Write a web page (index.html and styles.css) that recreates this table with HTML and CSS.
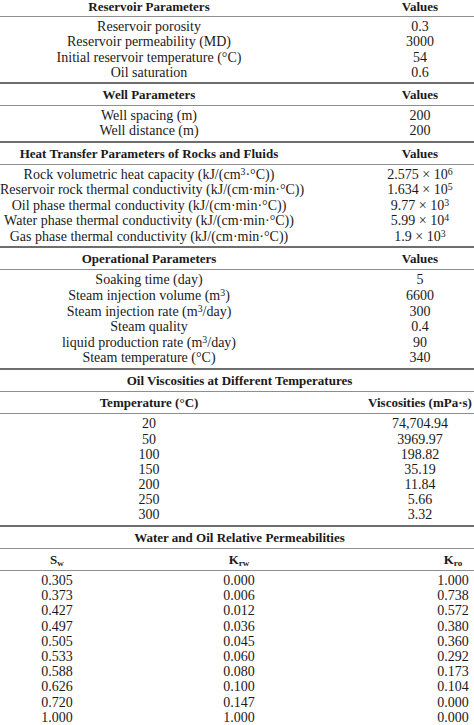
FILE: index.html
```html
<!DOCTYPE html>
<html lang="en">
<head>
<meta charset="utf-8">
<title>Simulation Parameters</title>
<link rel="stylesheet" href="styles.css">
</head>
<body>
<div class="page">
  <div class="table">

    <section class="block">
      <div class="row head first"><span>Reservoir Parameters</span><span>Values</span></div>
      <div class="body">
        <div class="row"><span>Reservoir porosity</span><span>0.3</span></div>
        <div class="row"><span>Reservoir permeability (MD)</span><span>3000</span></div>
        <div class="row"><span>Initial reservoir temperature (°C)</span><span>54</span></div>
        <div class="row"><span>Oil saturation</span><span>0.6</span></div>
      </div>
    </section>

    <section class="block">
      <div class="row head"><span>Well Parameters</span><span>Values</span></div>
      <div class="body">
        <div class="row"><span>Well spacing (m)</span><span>200</span></div>
        <div class="row"><span>Well distance (m)</span><span>200</span></div>
      </div>
    </section>

    <section class="block">
      <div class="row head"><span>Heat Transfer Parameters of Rocks and Fluids</span><span>Values</span></div>
      <div class="body tall">
        <div class="row"><span>Rock volumetric heat capacity (kJ/(cm<sup>3</sup>·°C))</span><span>2.575 × 10<sup>6</sup></span></div>
        <div class="row"><span>Reservoir rock thermal conductivity (kJ/(cm·min·°C))</span><span>1.634 × 10<sup>5</sup></span></div>
        <div class="row"><span>Oil phase thermal conductivity (kJ/(cm·min·°C))</span><span>9.77 × 10<sup>3</sup></span></div>
        <div class="row"><span>Water phase thermal conductivity (kJ/(cm·min·°C))</span><span>5.99 × 10<sup>4</sup></span></div>
        <div class="row"><span>Gas phase thermal conductivity (kJ/(cm·min·°C))</span><span>1.9 × 10<sup>3</sup></span></div>
      </div>
    </section>

    <section class="block">
      <div class="row head"><span>Operational Parameters</span><span>Values</span></div>
      <div class="body taller">
        <div class="row"><span>Soaking time (day)</span><span>5</span></div>
        <div class="row"><span>Steam injection volume (m<sup>3</sup>)</span><span>6600</span></div>
        <div class="row"><span>Steam injection rate (m<sup>3</sup>/day)</span><span>300</span></div>
        <div class="row"><span>Steam quality</span><span>0.4</span></div>
        <div class="row"><span>liquid production rate (m<sup>3</sup>/day)</span><span>90</span></div>
        <div class="row"><span>Steam temperature (°C)</span><span>340</span></div>
      </div>
    </section>

    <section class="block">
      <div class="title">Oil Viscosities at Different Temperatures</div>
      <div class="row head"><span>Temperature (°C)</span><span>Viscosities (mPa·s)</span></div>
      <div class="body">
        <div class="row"><span>20</span><span>74,704.94</span></div>
        <div class="row"><span>50</span><span>3969.97</span></div>
        <div class="row"><span>100</span><span>198.82</span></div>
        <div class="row"><span>150</span><span>35.19</span></div>
        <div class="row"><span>200</span><span>11.84</span></div>
        <div class="row"><span>250</span><span>5.66</span></div>
        <div class="row"><span>300</span><span>3.32</span></div>
      </div>
    </section>

    <section class="block">
      <div class="title">Water and Oil Relative Permeabilities</div>
      <div class="row three head"><span>S<sub>w</sub></span><span>K<sub>rw</sub></span><span>K<sub>ro</sub></span></div>
      <div class="body">
        <div class="row three"><span>0.305</span><span>0.000</span><span>1.000</span></div>
        <div class="row three"><span>0.373</span><span>0.006</span><span>0.738</span></div>
        <div class="row three"><span>0.427</span><span>0.012</span><span>0.572</span></div>
        <div class="row three"><span>0.497</span><span>0.036</span><span>0.380</span></div>
        <div class="row three"><span>0.505</span><span>0.045</span><span>0.360</span></div>
        <div class="row three"><span>0.533</span><span>0.060</span><span>0.292</span></div>
        <div class="row three"><span>0.588</span><span>0.080</span><span>0.173</span></div>
        <div class="row three"><span>0.626</span><span>0.100</span><span>0.104</span></div>
        <div class="row three"><span>0.720</span><span>0.147</span><span>0.000</span></div>
        <div class="row three"><span>1.000</span><span>1.000</span><span>0.000</span></div>
      </div>
    </section>

  </div>
</div>
</body>
</html>
```

FILE: styles.css
```css
html, body {
  margin: 0;
  padding: 0;
  background: #ffffff;
}

.page {
  width: 474px;
  height: 725px;
  overflow: hidden;
  background: #ffffff;
}

.table {
  width: 542px;
  font-family: "Liberation Serif", "Times New Roman", serif;
  font-size: 14px;
  color: #1a1a1a;
}

.row {
  display: grid;
  grid-template-columns: 298px 244px;
  height: 15.2px;
  line-height: 15.2px;
  text-align: center;
  white-space: nowrap;
}

.row.three {
  grid-template-columns: 114px 250px 178px;
}

.head {
  font-weight: bold;
  font-size: 13px;
  padding: 3px 0;
  border-bottom: 1px solid #8e8e8e;
}

.head.first {
  height: 13px;
  line-height: 13px;
  padding: 0 0 3.2px;
}

.title {
  width: 479px;
  height: 15.2px;
  line-height: 15.2px;
  padding: 3px 0;
  text-align: center;
  font-weight: bold;
  font-size: 13px;
  white-space: nowrap;
  border-bottom: 1px solid #8e8e8e;
}

.body {
  padding: 2px 0;
  border-bottom: 2px solid #6e6e6e;
}

.body.tall .row {
  height: 15.5px;
  line-height: 15.5px;
}

.body.taller .row {
  height: 15.6px;
  line-height: 15.6px;
}

sup {
  font-size: 70%;
  line-height: 0;
  vertical-align: 0.45em;
}

sub {
  font-size: 70%;
  line-height: 0;
  vertical-align: -0.2em;
}
```
